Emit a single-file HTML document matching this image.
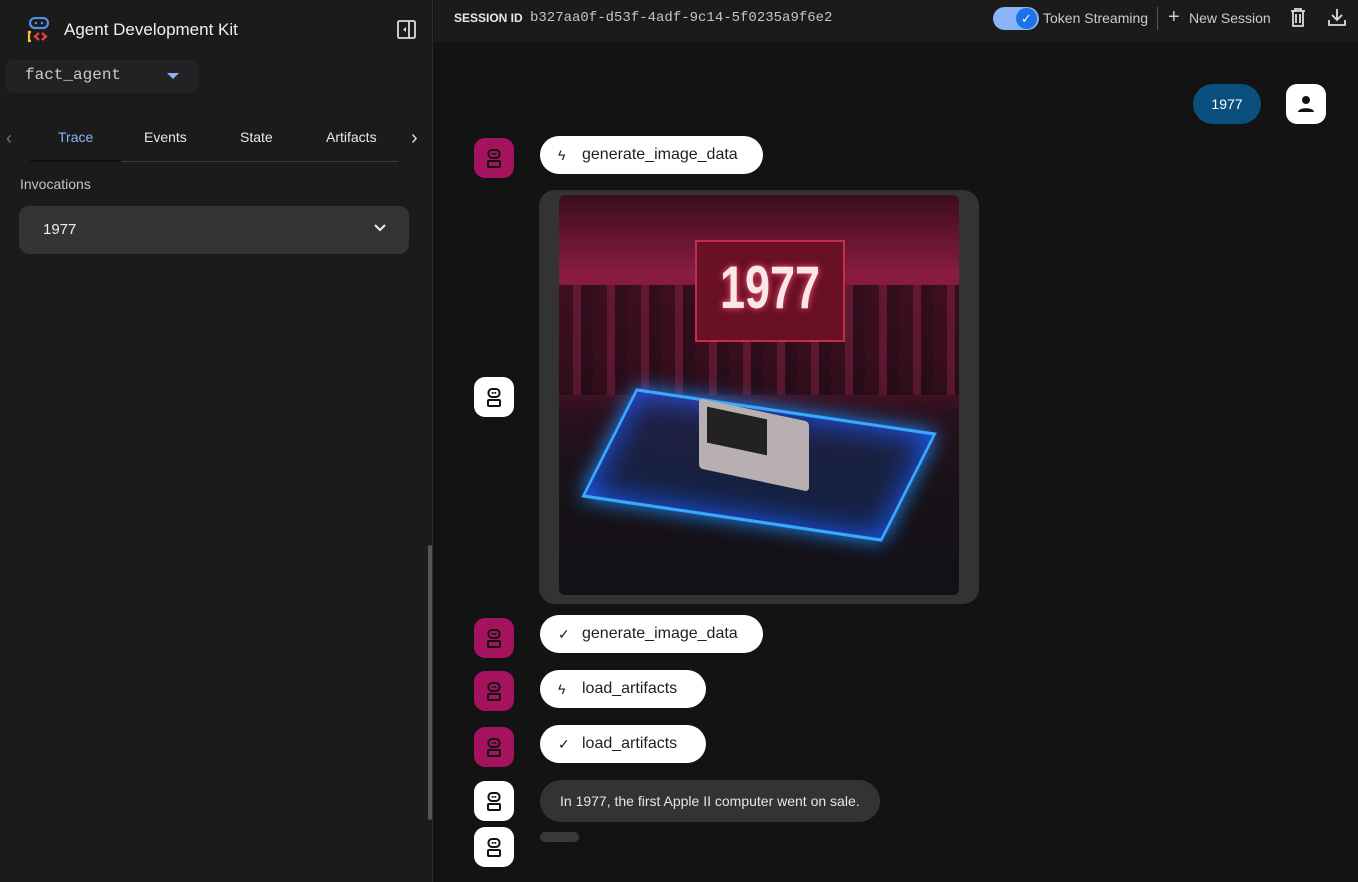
<!DOCTYPE html>
<html><head><meta charset="utf-8"><style>
*{box-sizing:border-box;margin:0;padding:0}
body{width:1358px;height:882px;background:#131314;font-family:"Liberation Sans",sans-serif;position:relative;overflow:hidden;color:#e3e3e3}
.side{position:absolute;left:0;top:0;width:433px;height:882px;background:#1b1b1c;border-right:1px solid #2c2c2c}
.abs{position:absolute}
.av{position:absolute;left:474px;width:40px;height:40px;border-radius:11px;display:flex;align-items:center;justify-content:center}
.mag{background:#a5135e}.wh{background:#fff}
.pill{position:absolute;left:540px;height:38px;background:#fff;border-radius:19px;color:#1f1f1f;font-size:16px;display:flex;align-items:center;padding:0 0 0 18px}
.pill .ic{width:14px;margin-right:10px;font-size:14px}
</style></head><body>
<div class="side">
 <svg class="abs" style="left:27px;top:17px" width="24" height="26" viewBox="0 0 24 26"><rect x="3" y="1" width="18" height="10" rx="5" fill="none" stroke="#4f8fe8" stroke-width="2.2"/><circle cx="9" cy="6" r="1.3" fill="#4f8fe8"/><circle cx="15" cy="6" r="1.3" fill="#4f8fe8"/><path d="M4 15h-2v9h2" stroke="#f2c230" stroke-width="2.2" fill="none"/><path d="M12 16l-4 3.5 4 3.5" stroke="#e8453c" stroke-width="2.2" fill="none"/><path d="M15 16l4 3.5-4 3.5" stroke="#e8453c" stroke-width="2.2" fill="none"/></svg>
 <div class="abs" style="left:64px;top:20px;font-size:17px;color:#f0f0f0">Agent Development Kit</div>
 <svg class="abs" style="left:397px;top:20px" width="19" height="19" viewBox="0 0 19 19"><rect x="1" y="1" width="17" height="17" rx="1.5" fill="none" stroke="#ddd" stroke-width="1.8"/><path d="M12 1v17" stroke="#ddd" stroke-width="1.8"/><path d="M9 7l-3 2.5 3 2.5z" fill="#ddd"/></svg>
 <div class="abs" style="left:5px;top:60px;width:193px;height:33px;background:#222224;border-radius:8px"></div>
 <div class="abs" style="left:25px;top:66px;font-family:'Liberation Mono',monospace;font-size:16px;color:#c9c9c9">fact_agent</div>
 <div class="abs" style="left:167px;top:73px;width:0;height:0;border-left:6px solid transparent;border-right:6px solid transparent;border-top:6px solid #8ab4f8"></div>
 <div class="abs" style="left:6px;top:128px;font-size:18px;color:#777">‹</div>
 <div class="abs" style="left:411px;top:127px;font-size:20px;color:#ddd">›</div>
 <div class="abs" style="left:58px;top:129px;font-size:14px;color:#8ab4f8">Trace</div>
 <div class="abs" style="left:144px;top:129px;font-size:14px;color:#e8e8e8">Events</div>
 <div class="abs" style="left:240px;top:129px;font-size:14px;color:#e8e8e8">State</div>
 <div class="abs" style="left:326px;top:129px;font-size:14px;color:#e8e8e8">Artifacts</div>
 <div class="abs" style="left:30px;top:161px;width:368px;height:1px;background:#3a3a3a"></div>
 <div class="abs" style="left:30px;top:160px;width:91px;height:2px;background:#111"></div>
 <div class="abs" style="left:20px;top:176px;font-size:14px;color:#c4c4c4">Invocations</div>
 <div class="abs" style="left:19px;top:206px;width:390px;height:48px;background:#333436;border-radius:10px"></div>
 <div class="abs" style="left:43px;top:221px;font-size:15px;color:#eee">1977</div>
 <svg class="abs" style="left:373px;top:223px" width="14" height="10" viewBox="0 0 14 10"><path d="M2 2l5 5 5-5" stroke="#eee" stroke-width="2" fill="none"/></svg>
 <div class="abs" style="left:428px;top:545px;width:4px;height:275px;background:#555;border-radius:2px"></div>
</div>
<div class="abs" style="left:434px;top:0;width:924px;height:42px;background:#1b1b1c"></div>
<div class="abs" style="left:454px;top:11px;font-size:12px;font-weight:bold;color:#e8e8e8">SESSION ID</div>
<div class="abs" style="left:530px;top:10px;font-family:'Liberation Mono',monospace;font-size:14px;color:#c4c4c4">b327aa0f-d53f-4adf-9c14-5f0235a9f6e2</div>
<div class="abs" style="left:993px;top:7px;width:46px;height:23px;background:#8ab4f8;border-radius:12px"></div>
<div class="abs" style="left:1016px;top:8px;width:21px;height:21px;background:#1a73e8;border-radius:50%;color:#fff;font-size:13px;text-align:center;line-height:21px">✓</div>
<div class="abs" style="left:1043px;top:10px;font-size:14px;color:#ccc">Token Streaming</div>
<div class="abs" style="left:1157px;top:7px;width:1px;height:23px;background:#555"></div>
<div class="abs" style="left:1168px;top:6px;font-size:20px;color:#ccc">+</div>
<div class="abs" style="left:1189px;top:10px;font-size:14px;color:#ccc">New Session</div>
<svg class="abs" style="left:1290px;top:8px" width="16" height="19" viewBox="0 0 16 19"><path d="M1 3h14M5 3V1h6v2M3 3v15h10V3M6 6v9M10 6v9" stroke="#ddd" stroke-width="1.8" fill="none"/></svg>
<svg class="abs" style="left:1328px;top:8px" width="18" height="18" viewBox="0 0 18 18"><path d="M9 1v11M4 7l5 5 5-5M1 12v5h16v-5" stroke="#ddd" stroke-width="1.8" fill="none"/></svg>

<div class="abs" style="left:1193px;top:84px;width:68px;height:40px;background:#0b4f7e;border-radius:20px;color:#fff;font-size:14px;text-align:center;line-height:40px">1977</div>
<div class="abs" style="left:1286px;top:84px;width:40px;height:40px;background:#fff;border-radius:11px"></div>
<svg class="abs" style="left:1296px;top:94px" width="20" height="20" viewBox="0 0 20 20"><circle cx="10" cy="6" r="4" fill="#111"/><path d="M2 18c0-5 16-5 16 0z" fill="#111"/></svg>

<svg width="0" height="0" style="position:absolute"><defs><g id="bot"><rect x="1.5" y="1" width="11" height="8" rx="3.5" fill="none" stroke="currentColor" stroke-width="2"/><rect x="4.8" y="4" width="1.8" height="1.8" fill="currentColor"/><rect x="7.4" y="4" width="1.8" height="1.8" fill="currentColor"/><rect x="1" y="12" width="12" height="6" rx="1" fill="none" stroke="currentColor" stroke-width="2"/></g></defs></svg>
<div class="av mag" style="top:138px;color:#111"><svg width="14" height="19"><use href="#bot"/></svg></div>
<div class="pill" style="top:136px;width:223px"><span class="ic">ϟ</span>generate_image_data</div>
<div class="av wh" style="top:377px;color:#111"><svg width="14" height="19"><use href="#bot"/></svg></div>
<div class="abs" style="left:539px;top:190px;width:440px;height:414px;background:#333;border-radius:16px"></div>
<div class="abs" style="left:559px;top:195px;width:400px;height:400px;border-radius:6px;overflow:hidden;background:linear-gradient(#3a0d1e 0%,#8a1c40 20%,#6a1634 40%,#2a101c 55%,#1a1218 70%,#121018 100%)">
 <div class="abs" style="left:0;top:90px;width:400px;height:110px;background:repeating-linear-gradient(90deg,#2a0c18 0 14px,#5a1830 14px 22px,#1e0a14 22px 34px);opacity:.8"></div>
 <div class="abs" style="left:136px;top:45px;width:150px;height:102px;background:#6a1024;border:2px solid #c0304a"></div>
 <div class="abs" style="left:136px;top:58px;width:150px;text-align:center;font-size:60px;font-weight:bold;color:#fbe6ea;transform:scaleX(.75);text-shadow:0 0 8px #ff5a78">1977</div>
 <div class="abs" style="left:40px;top:215px;width:320px;height:110px;transform:skewX(-20deg) rotate(8deg);border:3px solid #3aa8ff;box-shadow:0 0 20px #1a8cff,inset 0 0 30px #1a5cff;background:rgba(20,60,140,.35)"></div>
 <div class="abs" style="left:140px;top:215px;width:110px;height:70px;background:#b8b0b0;border-radius:4px;transform:skewY(12deg)"></div>
 <div class="abs" style="left:148px;top:218px;width:60px;height:36px;background:#222;transform:skewY(12deg)"></div>
</div>
<div class="av mag" style="top:618px;color:#111"><svg width="14" height="19"><use href="#bot"/></svg></div>
<div class="pill" style="top:615px;width:223px"><span class="ic">✓</span>generate_image_data</div>
<div class="av mag" style="top:671px;color:#111"><svg width="14" height="19"><use href="#bot"/></svg></div>
<div class="pill" style="top:670px;width:166px"><span class="ic">ϟ</span>load_artifacts</div>
<div class="av mag" style="top:727px;color:#111"><svg width="14" height="19"><use href="#bot"/></svg></div>
<div class="pill" style="top:725px;width:166px"><span class="ic">✓</span>load_artifacts</div>
<div class="av wh" style="top:781px;color:#111"><svg width="14" height="19"><use href="#bot"/></svg></div>
<div class="abs" style="left:540px;top:780px;width:340px;height:42px;background:#333335;border-radius:21px;color:#e6e6e6;font-size:14px;line-height:42px;padding-left:20px">In 1977, the first Apple II computer went on sale.</div>
<div class="av wh" style="top:827px;color:#111"><svg width="14" height="19"><use href="#bot"/></svg></div>
<div class="abs" style="left:540px;top:832px;width:39px;height:10px;background:#3a3a3c;border-radius:5px"></div>
</body></html>
